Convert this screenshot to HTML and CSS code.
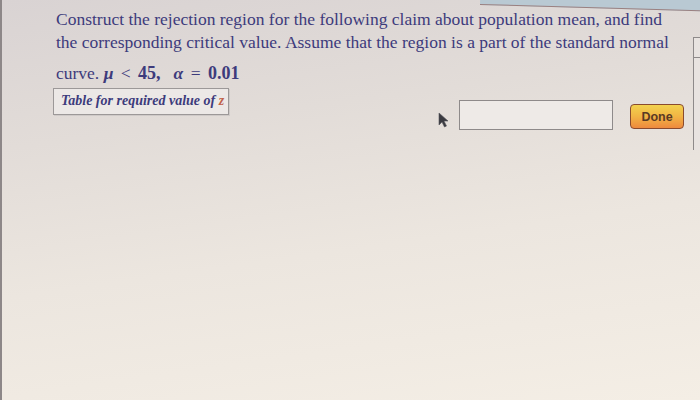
FILE: index.html
```html
<!DOCTYPE html>
<html>
<head>
<meta charset="utf-8">
<link rel="stylesheet" href="styles.css">
</head>
<body>
<div class="screen">
  <div class="topedge"></div>
  <div class="content">
    <p class="question">Construct the rejection region for the following claim about population mean, and find<br>the corresponding critical value. Assume that the region is a part of the standard normal<br><span class="last">curve. <span class="math"><i class="mu">μ</i> <span class="op">&lt;</span> <b>45,</b>&nbsp;&nbsp;&nbsp;<i class="alpha">α</i> <span class="op">=</span> <b>0.01</b></span></span></p>
    <div class="row">
      <div class="tablebtn">Table for required value of <span class="z">z</span></div>
    </div>
    <div class="answer">
      <svg class="cursor" width="12" height="16" viewBox="0 0 12 16"><path d="M1 1 L1 13 L4 10 L6.5 15 L8.5 14 L6 9 L10 9 Z" fill="#3a3a40" stroke="#55555a" stroke-width="0.6"/></svg>
      <div class="input"></div>
      <div class="done">Done</div>
    </div>
  </div>
  <div class="sidepanel"><div class="sidehead"></div></div>
</div>
</body>
</html>
```

FILE: styles.css
```css
html, body {
  margin: 0;
  padding: 0;
  width: 700px;
  height: 400px;
  overflow: hidden;
}
.screen {
  position: relative;
  width: 700px;
  height: 400px;
  background: linear-gradient(172deg, #d9d3d3 0%, #e2dcd8 30%, #ece6df 60%, #f4eee5 100%);
  border-left: 2px solid #8d8788;
  box-sizing: border-box;
  overflow: hidden;
}
.topedge {
  position: absolute;
  left: 478px;
  top: -10px;
  width: 260px;
  height: 14px;
  background: #b9c9d3;
  border-bottom: 1.5px solid #9a8080;
  transform: rotate(1.6deg);
  transform-origin: left bottom;
}
.content {
  padding: 8px 0 0 54px;
}
.question {
  margin: 0;
  width: 640px;
  font-family: "Liberation Serif", "Times New Roman", serif;
  font-size: 17.5px;
  line-height: 23px;
  color: #3d3b7c;
}
.last {
  display: inline-block;
  padding-top: 8px;
}
.math b {
  font-weight: bold;
  font-size: 18px;
}
.mu, .alpha {
  font-weight: bold;
  font-style: italic;
}
.op {
  margin: 0 3px;
}
.row {
  margin-top: 3px;
}
.tablebtn {
  display: inline-block;
  margin-left: -3px;
  padding: 4px 4px 5px 7px;
  border: 1.5px solid #9c9898;
  background: #ece8e6;
  font-family: "Liberation Serif", "Times New Roman", serif;
  font-style: italic;
  font-weight: bold;
  font-size: 14px;
  color: #3d3b7c;
  box-shadow: 1px 1px 0 #cfcac8;
}
.z {
  color: #c0624a;
}
.answer {
  display: flex;
  align-items: flex-start;
  margin-top: -15px;
  margin-left: 382px;
}
.cursor {
  margin-top: 12px;
}
.input {
  width: 154px;
  height: 30px;
  margin-left: 9px;
  border: 1.5px solid #8e8a8a;
  background: #eeeae7;
  box-sizing: border-box;
}
.done {
  width: 54px;
  height: 25px;
  margin-left: 17px;
  margin-top: 4px;
  box-sizing: border-box;
  border: 1.5px solid #8a4b2e;
  border-radius: 4px;
  background: linear-gradient(180deg, #f2d24e 0%, #f2b444 50%, #ee8a3e 100%);
  font-family: "Liberation Sans", Arial, sans-serif;
  font-weight: bold;
  font-size: 12.5px;
  color: #5a3a24;
  display: flex;
  align-items: center;
  justify-content: center;
}
.sidepanel {
  position: absolute;
  left: 691px;
  top: 37px;
  width: 20px;
  height: 112px;
  border-left: 1.5px solid #8e8a8a;
  border-top: 1.5px solid #8e8a8a;
  background: #e8e3e0;
}
.sidehead {
  height: 19px;
  border-bottom: 1.5px solid #8e8a8a;
}
```
